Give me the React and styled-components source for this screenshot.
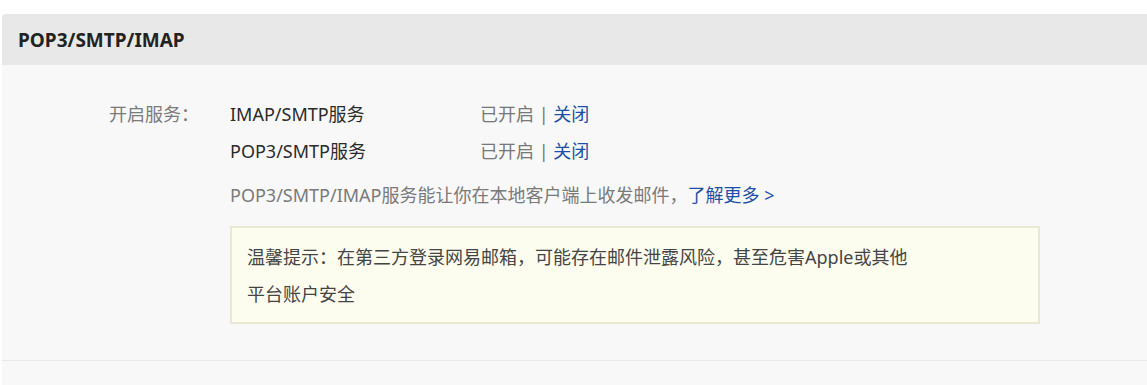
import React from "react";
import styled, { createGlobalStyle } from "styled-components";

const Global = createGlobalStyle`
  html, body { margin: 0; padding: 0; background: #ffffff; }
  body {
    font-family: "Noto Sans", "Noto Sans CJK SC", sans-serif;
    font-size: 18px;
  }
`;

const Page = styled.div`
  padding-top: 14px;
  padding-left: 2px;
  height: 385px;
  box-sizing: border-box;
  overflow: hidden;
  display: flex;
  flex-direction: column;
`;

const Panel = styled.section`
  display: flex;
  flex-direction: column;
  flex: 1;
  background: #f8f8f8;
  border-top-left-radius: 4px;
  overflow: hidden;
`;

const Header = styled.header`
  height: 51px;
  background: #e8e8e8;
  display: flex;
  align-items: center;
  padding-left: 16px;
  font-weight: 700;
  font-size: 19px;
  color: #222;
`;

const Body = styled.div`
  display: flex;
  padding-top: 31px;
  padding-bottom: 36px;
  border-bottom: 1px solid #e9e9e9;
`;

const Label = styled.div`
  width: 197px;
  flex: none;
  text-align: right;
  line-height: 37px;
  color: #7a7a7a;
`;

const Content = styled.div`
  margin-left: 31px;
  display: flex;
  flex-direction: column;
`;

const ServiceRow = styled.div`
  display: flex;
  line-height: 37px;
`;

const ServiceName = styled.span`
  width: 250px;
  color: #2a2a2a;
`;

const Status = styled.span`
  color: #777;
`;

const Link = styled.a`
  color: #1c4fa8;
  text-decoration: none;
  cursor: pointer;
`;

const Desc = styled.p`
  margin: 7px 0 0;
  line-height: 37px;
  color: #7a7a7a;
`;

const Notice = styled.div`
  margin-top: 12px;
  width: 810px;
  box-sizing: border-box;
  border: 2px solid #e9e9d3;
  background: #fdfdef;
  padding: 11px 15px 9px;
  line-height: 37px;
  color: #444;
`;

const Rest = styled.div`
  flex: 1;
`;

export default function App() {
  const services = ["IMAP/SMTP服务", "POP3/SMTP服务"];
  return (
    <>
      <Global />
      <Page>
        <Panel>
          <Header>POP3/SMTP/IMAP</Header>
          <Body>
            <Label>开启服务：</Label>
            <Content>
              {services.map((s) => (
                <ServiceRow key={s}>
                  <ServiceName>{s}</ServiceName>
                  <Status>
                    已开启 | <Link>关闭</Link>
                  </Status>
                </ServiceRow>
              ))}
              <Desc>
                POP3/SMTP/IMAP服务能让你在本地客户端上收发邮件，<Link>了解更多 &gt;</Link>
              </Desc>
              <Notice>
                温馨提示：在第三方登录网易邮箱，可能存在邮件泄露风险，甚至危害Apple或其他
                <br />
                平台账户安全
              </Notice>
            </Content>
          </Body>
          <Rest />
        </Panel>
      </Page>
    </>
  );
}
